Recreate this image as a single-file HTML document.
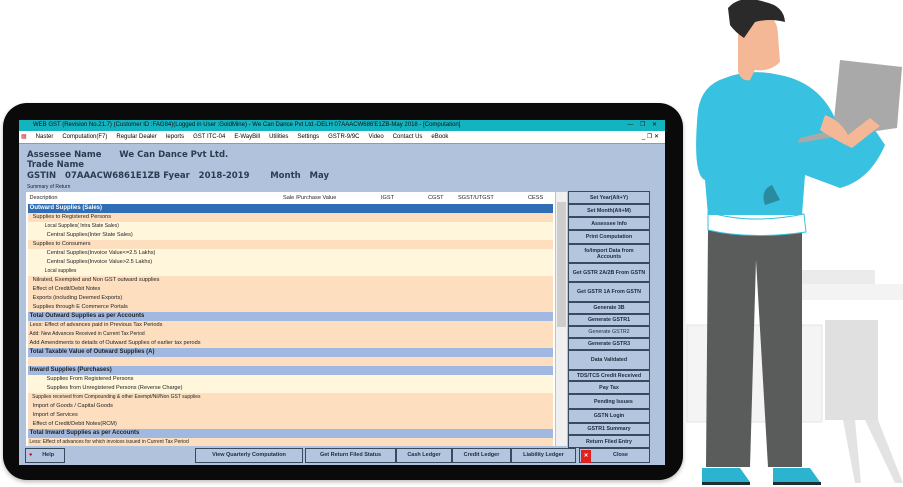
<!DOCTYPE html>
<html><head><meta charset="utf-8"><style>
*{margin:0;padding:0;box-sizing:border-box}
body{width:903px;height:487px;background:#fff;position:relative;overflow:hidden;font-family:"Liberation Sans",sans-serif}
.abs{position:absolute}
#tab{left:3px;top:103px;width:680px;height:377px;background:#0a0a0a;border-radius:24px;box-shadow:0 2px 4px #bbb}
#scr{left:19px;top:120px;width:646px;height:345px;background:#b1c3dc;overflow:hidden}
#title{left:0;top:0;width:646px;height:11px;background:#13b4bf;font-size:6px;color:#111;line-height:11px;padding-left:14px;white-space:nowrap}
#menu{left:0;top:11px;width:646px;height:13px;background:#fff;font-size:6px;line-height:13px;white-space:nowrap;border-bottom:1px solid #999}
#menu span{margin-left:9px}
.hd{font-family:"DejaVu Sans",sans-serif;font-weight:bold;font-size:8.5px;color:#2c3c50;white-space:nowrap}
#tbl{left:7px;top:72px;width:529px;height:254px;background:#fff;overflow:hidden}
.r{position:absolute;left:2px;width:525px;height:9px;font-size:5.6px;line-height:9px;white-space:nowrap;color:#222}
.p{background:#fddfc0}.c{background:#fff6dc}.b{background:#a1b9e0;font-weight:bold;font-size:6px}.d{background:#2f6db4;color:#fff;font-weight:bold;font-size:6px}
.btn{position:absolute;left:549px;width:82px;border:1px solid #3a4a5e;background:#b4c6df;font-size:5.3px;font-weight:bold;text-align:center;color:#1c2a3a;display:flex;align-items:center;justify-content:center}
.bb{position:absolute;top:328px;height:15px;border:1px solid #3a4a5e;background:#b4c6df;font-size:5.5px;font-weight:bold;text-align:center;line-height:13px;color:#1c2a3a}
</style></head><body>
<svg class="abs" style="left:680px;top:260px" width="223" height="227">
<rect x="120" y="10" width="75" height="28" fill="#ebebeb"/>
<rect x="120" y="24" width="110" height="16" fill="#f3f3f3"/>
<rect x="7" y="65" width="135" height="97" fill="#f4f4f4" stroke="#e4e4e4"/>
<rect x="145" y="60" width="53" height="100" fill="#e0e0e0"/>
<path d="M163 160l12 63h6l-6-63z M185 160l30 63h8l-25-63z" fill="#e3e3e3"/>
</svg>
<svg class="abs" style="left:680px;top:0" width="223" height="487">
<path d="M28 230 L26 467 L70 467 L76 260 L88 467 L122 467 L122 230Z" fill="#5a5b5b"/>
<path d="M22 468 L60 468 L70 482 L22 484Z M93 468 L130 468 L140 482 L93 484Z" fill="#2bb3d0"/>
<path d="M22 482h48v3H22z M93 482h48v3H93z" fill="#1f2d33"/>
<path d="M28 212 Q70 225 124 214 L126 232 Q70 240 28 230Z" fill="#fff" stroke="#38c1e0" stroke-width="1"/>
<path d="M45 78 Q70 68 100 75 Q150 85 162 140 L195 130 L205 145 Q190 180 160 188 L125 175 L122 215 L28 215 L25 180 Q12 175 18 110 Q22 85 45 78Z" fill="#38c1e0"/>
<path d="M92 185 Q80 190 85 205 L100 200Z" fill="#2a8aa0"/>
<path d="M160 60 L222 67 L217 128 L155 137 L118 143 L120 138 L153 130Z" fill="#a9a9a9"/>
<path d="M145 115 Q160 120 168 135 L190 118 L200 126 L172 148 Q155 140 140 130Z" fill="#f5b896"/>
<path d="M58 25 Q60 10 80 12 Q98 16 98 35 L100 62 Q90 72 75 70 L70 80 Q62 82 58 72Z" fill="#f5b896"/>
<path d="M48 8 Q60 -6 85 2 Q104 6 105 22 Q90 18 75 22 L64 38 Q55 32 50 25Z" fill="#2a2a2a"/>
</svg>
<div id="tab" class="abs"></div>
<div id="scr" class="abs">
<div id="title" class="abs">WEB GST (Revision No.21.7) (Customer ID :FAG84)(Logged in User :GoldMine) - We Can Dance Pvt Ltd.-DELH 07AAACW686'E1ZB-May 2018 - [Computation]<span style="position:absolute;right:8px;top:0">—&nbsp;&nbsp;&nbsp;&nbsp;❐&nbsp;&nbsp;&nbsp;&nbsp;✕</span></div>
<div id="menu" class="abs"><span style="margin-left:2px;color:#c33">▦</span><span>Naster</span><span>Computation(F7)</span><span>Regular Dealer</span><span>Ieports</span><span>GST ITC-04</span><span>E-WayBill</span><span>Utilities</span><span>Settings</span><span>GSTR-9/9C</span><span>Video</span><span>Contact Us</span><span>eBook</span><span style="position:absolute;right:6px">_ ❐ ✕</span></div>
<div class="abs hd" style="left:8px;top:30px">Assessee Name&nbsp;&nbsp;&nbsp;&nbsp;&nbsp;&nbsp;We Can Dance Pvt Ltd.</div>
<div class="abs hd" style="left:8px;top:40px">Trade Name</div>
<div class="abs hd" style="left:8px;top:51px">GSTIN&nbsp;&nbsp;&nbsp;07AAACW6861E1ZB Fyear&nbsp;&nbsp;&nbsp;2018-2019&nbsp;&nbsp;&nbsp;&nbsp;&nbsp;&nbsp;&nbsp;Month&nbsp;&nbsp;&nbsp;May</div>
<div class="abs" style="left:8px;top:64px;font-size:5px;color:#222">Summary of Return</div>
<div id="tbl" class="abs">
<div class="r" style="top:0;height:12px;line-height:12px;background:#fff">&nbsp;Description<span style="position:absolute;left:255px">Sale /Purchase Value</span><span style="position:absolute;left:353px">IGST</span><span style="position:absolute;left:400px">CGST</span><span style="position:absolute;left:430px">SGST/UTGST</span><span style="position:absolute;left:500px">CESS</span></div>
<div class="r d" style="top:12px">&nbsp;Outward Supplies (Sales)</div>
<div class="r p" style="top:21px">&nbsp;&nbsp;&nbsp;Supplies to Registered Persons</div>
<div class="r c" style="top:30px;font-size:5px">&nbsp;&nbsp;&nbsp;&nbsp;&nbsp;&nbsp;&nbsp;&nbsp;&nbsp;&nbsp;&nbsp;&nbsp;Local Supplies( Intra State Sales)</div>
<div class="r c" style="top:39px">&nbsp;&nbsp;&nbsp;&nbsp;&nbsp;&nbsp;&nbsp;&nbsp;&nbsp;&nbsp;&nbsp;&nbsp;Central Supplies(Inter State Sales)</div>
<div class="r p" style="top:48px">&nbsp;&nbsp;&nbsp;Supplies to Consumers</div>
<div class="r c" style="top:57px">&nbsp;&nbsp;&nbsp;&nbsp;&nbsp;&nbsp;&nbsp;&nbsp;&nbsp;&nbsp;&nbsp;&nbsp;Central Supplies(Invoice Value&lt;=2.5 Lakhs)</div>
<div class="r c" style="top:66px">&nbsp;&nbsp;&nbsp;&nbsp;&nbsp;&nbsp;&nbsp;&nbsp;&nbsp;&nbsp;&nbsp;&nbsp;Central Supplies(Invoice Value&gt;2.5 Lakhs)</div>
<div class="r c" style="top:75px;font-size:5px">&nbsp;&nbsp;&nbsp;&nbsp;&nbsp;&nbsp;&nbsp;&nbsp;&nbsp;&nbsp;&nbsp;&nbsp;Local supplies</div>
<div class="r p" style="top:84px">&nbsp;&nbsp;&nbsp;Nilrated, Exempted and Non GST outward supplies</div>
<div class="r p" style="top:93px">&nbsp;&nbsp;&nbsp;Effect of Credit/Debit Notes</div>
<div class="r p" style="top:102px">&nbsp;&nbsp;&nbsp;Exports (including Deemed Exports)</div>
<div class="r p" style="top:111px">&nbsp;&nbsp;&nbsp;Supplies through E Commerce Portals</div>
<div class="r b" style="top:120px">&nbsp;Total Outward Supplies as per Accounts</div>
<div class="r p" style="top:129px">&nbsp;Less: Effect of advances paid in Previous Tax Periods</div>
<div class="r p" style="top:138px;font-size:5px">&nbsp;Add: New Advances Received in Current Tax Period</div>
<div class="r p" style="top:147px">&nbsp;Add Amendments to details of Outward Supplies of earlier tax perods</div>
<div class="r b" style="top:156px">&nbsp;Total Taxable Value of Outward Supplies (A)</div>
<div class="r p" style="top:165px"></div>
<div class="r b" style="top:174px">&nbsp;Inward Supplies (Purchases)</div>
<div class="r c" style="top:183px">&nbsp;&nbsp;&nbsp;&nbsp;&nbsp;&nbsp;&nbsp;&nbsp;&nbsp;&nbsp;&nbsp;&nbsp;Supplies From Registered Persons</div>
<div class="r c" style="top:192px">&nbsp;&nbsp;&nbsp;&nbsp;&nbsp;&nbsp;&nbsp;&nbsp;&nbsp;&nbsp;&nbsp;&nbsp;Supplies from Unregistered Persons (Reverse Charge)</div>
<div class="r p" style="top:201px;font-size:5px">&nbsp;&nbsp;&nbsp;Supplies received from Compounding &amp; other Exempt/Nil/Non GST supplies</div>
<div class="r p" style="top:210px">&nbsp;&nbsp;&nbsp;Import of Goods / Capital Goods</div>
<div class="r p" style="top:219px">&nbsp;&nbsp;&nbsp;Import of Services</div>
<div class="r p" style="top:228px">&nbsp;&nbsp;&nbsp;Effect of Credit/Debit Notes(RCM)</div>
<div class="r b" style="top:237px">&nbsp;Total Inward Supplies as per Accounts</div>
<div class="r p" style="top:246px;font-size:5px">&nbsp;Less: Effect of advances for which invoices issued in Current Tax Period</div>
</div>
<div class="abs" style="left:537px;top:72px;width:11px;height:254px;background:#f0f0f0"><div style="margin:10px 1px;height:125px;background:#cdcdcd"></div></div>
<div class="btn" style="top:71px;height:13px">Set Year(Alt+Y)</div>
<div class="btn" style="top:84px;height:13px">Set Month(Alt+M)</div>
<div class="btn" style="top:97px;height:13px">Assessee Info</div>
<div class="btn" style="top:110px;height:14px">Print Computation</div>
<div class="btn" style="top:124px;height:19px">fo/import Data from<br>Accounts</div>
<div class="btn" style="top:143px;height:19px">Get GSTR 2A/2B From GSTN</div>
<div class="btn" style="top:162px;height:20px">Get GSTR 1A From GSTN</div>
<div class="btn" style="top:182px;height:12px">Generate 3B</div>
<div class="btn" style="top:194px;height:12px">Generate GSTR1</div>
<div class="btn" style="top:206px;height:12px;font-weight:normal">Generate GSTR2</div>
<div class="btn" style="top:218px;height:12px">Generate GSTR3</div>
<div class="btn" style="top:230px;height:20px">Data Validated</div>
<div class="btn" style="top:250px;height:11px">TDS/TCS Credit Received</div>
<div class="btn" style="top:261px;height:13px">Pay Tax</div>
<div class="btn" style="top:274px;height:15px">&nbsp;&nbsp;&nbsp;&nbsp;&nbsp;&nbsp;Pending Issues</div>
<div class="btn" style="top:289px;height:14px">GSTN Login</div>
<div class="btn" style="top:303px;height:12px">GSTR1 Summary</div>
<div class="btn" style="top:315px;height:13px">Return Filed Entry</div>
<div class="bb" style="left:6px;width:40px"><span style="color:#c00;float:left;margin-left:3px">●</span>Help</div>
<div class="bb" style="left:176px;width:108px">View Quarterly Computation</div>
<div class="bb" style="left:286px;width:91px">Get Return Filed Status</div>
<div class="bb" style="left:377px;width:56px">Cash Ledger</div>
<div class="bb" style="left:433px;width:59px">Credit Ledger</div>
<div class="bb" style="left:492px;width:65px">Liability Ledger</div>
<div class="bb" style="left:560px;width:71px"><span style="float:left;background:#d22;color:#fff;width:10px;margin:1px">✕</span>Close</div>
</div>
</body></html>
